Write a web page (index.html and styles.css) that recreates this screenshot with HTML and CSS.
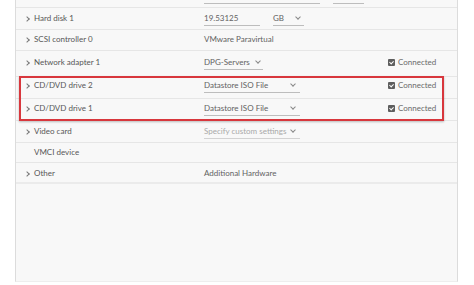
FILE: index.html
```html
<!DOCTYPE html>
<html lang="en">
<head>
    <meta charset="UTF-8">
    <title>Virtual Hardware</title>
    <link rel="stylesheet" href="styles.css">
</head>
<body>
    <div class="panel">
        <!-- hang so sau cung bi cat o tren -->
        <div class="row row-top">
            <div class="cell-label"></div>
            <div class="cell-value">
                <span class="field field-wide"></span>
                <span class="field field-small"></span>
            </div>
        </div>

        <div class="row row-disk">
            <div class="cell-label"><span class="chev"></span>Hard disk 1</div>
            <div class="cell-value">
                <span class="field field-disk">19.53125</span>
                <span class="field field-unit">GB<span class="caret"></span></span>
            </div>
        </div>

        <div class="row row-scsi">
            <div class="cell-label"><span class="chev"></span>SCSI controller 0</div>
            <div class="cell-value">VMware Paravirtual</div>
        </div>

        <div class="row row-net">
            <div class="cell-label"><span class="chev"></span>Network adapter 1</div>
            <div class="cell-value">
                <span class="field field-net">DPG-Servers<span class="caret"></span></span>
            </div>
            <div class="cell-check"><span class="checkbox"></span>Connected</div>
        </div>

        <div class="highlight">
            <div class="row row-cd2">
                <div class="cell-label"><span class="chev"></span>CD/DVD drive 2</div>
                <div class="cell-value">
                    <span class="field field-iso">Datastore ISO File<span class="caret"></span></span>
                </div>
                <div class="cell-check"><span class="checkbox"></span>Connected</div>
            </div>
            <div class="row row-cd1">
                <div class="cell-label"><span class="chev"></span>CD/DVD drive 1</div>
                <div class="cell-value">
                    <span class="field field-iso">Datastore ISO File<span class="caret"></span></span>
                </div>
                <div class="cell-check"><span class="checkbox"></span>Connected</div>
            </div>
        </div>

        <div class="row row-video">
            <div class="cell-label"><span class="chev"></span>Video card</div>
            <div class="cell-value">
                <span class="field field-iso disabled">Specify custom settings<span class="caret"></span></span>
            </div>
        </div>

        <div class="row row-vmci">
            <div class="cell-label"><span class="chev hidden"></span>VMCI device</div>
            <div class="cell-value"></div>
        </div>

        <div class="row row-other">
            <div class="cell-label"><span class="chev"></span>Other</div>
            <div class="cell-value">Additional Hardware</div>
        </div>
    </div>
</body>
</html>
```

FILE: styles.css
```css
body {
    margin: 0;
    background-color: #ffffff;
    font-family: Lato, "Liberation Sans", sans-serif;
    font-size: 8px;
    color: #5a5a5a;
}

/* khung chinh */
.panel {
    margin-left: 15px;
    width: 441px;
    height: 281px;
    background-color: #f8f8f8;
    border-left: 1px solid #dcdcdc;
    border-right: 1px solid #dcdcdc;
    border-bottom: 1px solid #eeeeee;
}

.row {
    display: grid;
    grid-template-columns: 188px 184px 1fr;
    align-items: start;
    border-bottom: 1px solid #e6e6e6;
    line-height: 12px;
    box-sizing: border-box;
}

.row-top { height: 8px; }
.row-disk { height: 22px; padding-top: 4px; }
.row-scsi { height: 21px; padding-top: 3px; }
.row-net { height: 26px; padding-top: 5px; }
.row-cd2 { height: 22px; padding-top: 2px; }
.row-cd1 { height: 22px; padding-top: 3px; }
.row-video { height: 22px; padding-top: 4px; }
.row-vmci { height: 20px; padding-top: 3px; }
.row-other {
    height: 21px;
    padding-top: 4px;
    border-bottom: 2px solid #ebebeb;
}

.cell-label {
    display: flex;
    align-items: center;
    padding-left: 9px;
    color: #575757;
}

.cell-value {
    display: flex;
    gap: 13px;
    color: #626262;
}

.cell-check {
    display: flex;
    align-items: center;
    padding-left: 0;
    color: #6a6a6a;
}

/* mui ten > */
.chev {
    width: 3px;
    height: 3px;
    border-right: 1px solid #777;
    border-top: 1px solid #777;
    transform: rotate(45deg);
    margin-right: 5px;
    margin-top: 1px;
    flex: none;
}

.chev.hidden {
    visibility: hidden;
}

/* o nhap co gach chan */
.field {
    display: flex;
    align-items: center;
    justify-content: space-between;
    height: 14px;
    border-bottom: 1px solid #bdbdbd;
    box-sizing: border-box;
    padding-bottom: 2px;
}

.row-top .field { height: 4px; padding: 0; }
.field-wide { width: 116px; }
.field-small { width: 31px; }
.field-disk { width: 56px; }
.field-unit { width: 31px; padding-right: 4px; }
.field-net { width: 59px; padding-right: 3px; }
.field-iso { width: 96px; padding-right: 5px; }
.field.disabled { color: #a9a9a9; border-bottom-color: #d2d2d2; }

.caret {
    width: 3px;
    height: 3px;
    border-right: 1px solid #888;
    border-bottom: 1px solid #888;
    transform: rotate(45deg);
    margin-top: -2px;
}

.checkbox {
    width: 7px;
    height: 7px;
    background-color: #5e5e5e;
    border-radius: 1px;
    margin-right: 3px;
    position: relative;
}

.checkbox::after {
    content: "";
    position: absolute;
    left: 2px;
    top: 1px;
    width: 2px;
    height: 3px;
    border-right: 1px solid #fff;
    border-bottom: 1px solid #fff;
    transform: rotate(45deg);
}

/* khung do danh dau */
.highlight {
    position: relative;
}

.highlight::after {
    content: "";
    position: absolute;
    top: -1px;
    bottom: 0;
    left: 3px;
    right: 13px;
    border: 2px solid #d8373d;
    box-shadow: 0 1px 2px rgba(0, 0, 0, 0.25);
    pointer-events: none;
}
```
